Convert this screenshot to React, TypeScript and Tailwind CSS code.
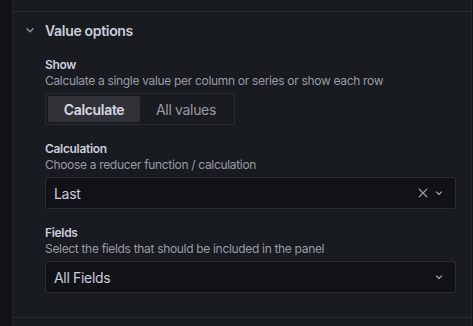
import React from 'react';

const font = { fontFamily: 'Inter, "Noto Sans", sans-serif' };

function ChevronDown({ className = '' }: { className?: string }) {
  return (
    <svg viewBox="0 0 16 16" className={className} fill="none" stroke="currentColor" strokeWidth="1.7" strokeLinecap="round" strokeLinejoin="round">
      <polyline points="4.5,6.5 8,10 11.5,6.5" />
    </svg>
  );
}

function Cross({ className = '' }: { className?: string }) {
  return (
    <svg viewBox="0 0 16 16" className={className} fill="none" stroke="currentColor" strokeWidth="1.6" strokeLinecap="round">
      <line x1="3" y1="3" x2="13" y2="13" />
      <line x1="13" y1="3" x2="3" y2="13" />
    </svg>
  );
}

function Field({ label, description, children }: { label: string; description: string; children: React.ReactNode }) {
  return (
    <div>
      <div className="text-[12px] leading-[17px] font-semibold text-[#ccccdc]">{label}</div>
      <div className="text-[12px] leading-[16px] text-[#9a9aa8]">{description}</div>
      <div className="mt-[4px]">{children}</div>
    </div>
  );
}

function Select({ value, clearable }: { value: string; clearable?: boolean }) {
  return (
    <div className="h-[32px] w-full flex items-center rounded-[2px] border border-[#2a2d33] bg-[#111217] pl-[8px] pr-[10px]">
      <span className="flex-1 text-[14px] text-[#ccccdc]">{value}</span>
      {clearable && <Cross className="w-[12px] h-[12px] text-[#9a9aa8] mr-[4px]" />}
      <ChevronDown className="w-[12px] h-[12px] text-[#9a9aa8]" />
    </div>
  );
}

export default function App() {
  return (
    <div style={font} className="w-[473px] h-[326px] bg-[#111217] flex overflow-hidden tracking-[-0.02em]">
      <div className="w-[13px] border-r border-[#22252b]" />
      <div className="w-[459px] bg-[#181b1f] border-r border-[#22252b]">
        <div className="h-[12px] border-b border-[#2a2d33]" />
        <div className="border-b border-[#2a2d33]">
          <div className="h-[36px] flex items-center pl-[10px]">
            <ChevronDown className="w-[14px] h-[14px] text-[#8e8e9e]" />
            <span className="ml-[8px] text-[14px] font-semibold text-[#ccccdc]">Value options</span>
          </div>
          <div className="pl-[32px] pr-[15px] pt-[8px] pb-[24px] flex flex-col gap-[15px]">
            <Field label="Show" description="Calculate a single value per column or series or show each row">
              <div className="inline-flex p-[2px] rounded-[2px] border border-[#2a2d33]">
                <div className="w-[92px] h-[26px] flex items-center justify-center rounded-[2px] bg-[#303238] text-[14px] font-semibold text-[#d8d8e4]">Calculate</div>
                <div className="w-[92px] h-[26px] flex items-center justify-center text-[14px] text-[#9a9aa8]">All values</div>
              </div>
            </Field>
            <Field label="Calculation" description="Choose a reducer function / calculation">
              <Select value="Last" clearable />
            </Field>
            <Field label="Fields" description="Select the fields that should be included in the panel">
              <Select value="All Fields" />
            </Field>
          </div>
        </div>
      </div>
    </div>
  );
}
